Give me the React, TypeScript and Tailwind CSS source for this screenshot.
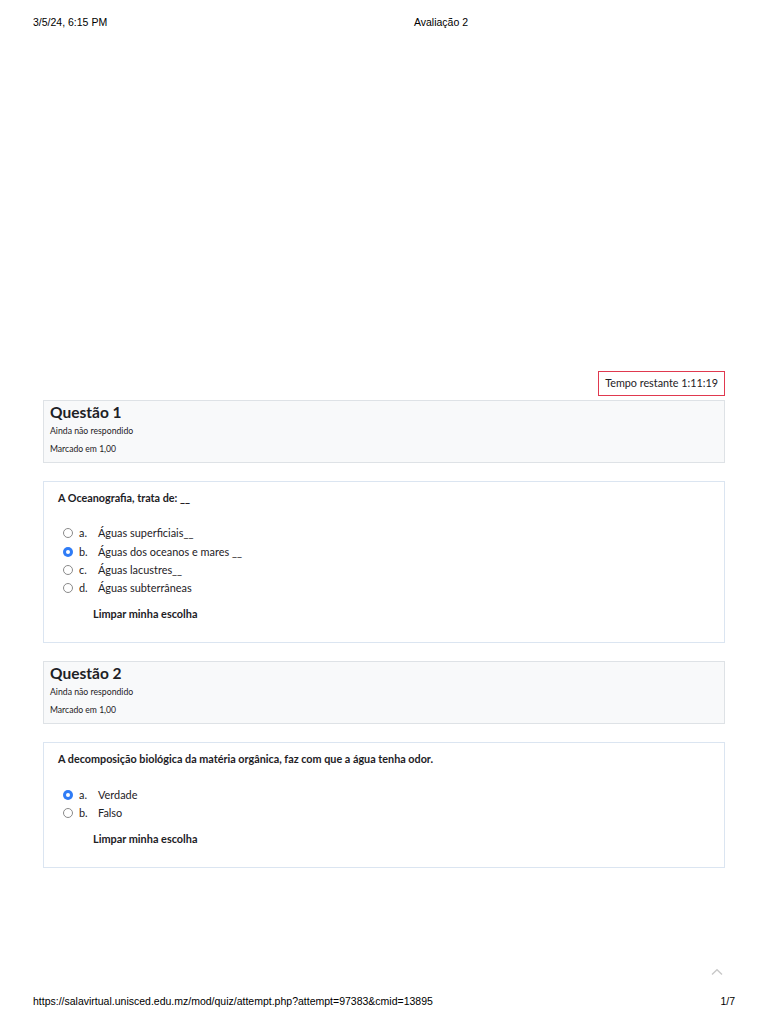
import React from 'react';

interface Question {
  number: number;
  text: string;
  options: { letter: string; label: string }[];
  selected: number;
}

const questions: Question[] = [
  {
    number: 1,
    text: 'A Oceanografia, trata de: __',
    options: [
      { letter: 'a.', label: 'Águas superficiais__' },
      { letter: 'b.', label: 'Águas dos oceanos e mares __' },
      { letter: 'c.', label: 'Águas lacustres__' },
      { letter: 'd.', label: 'Águas subterrâneas' },
    ],
    selected: 1,
  },
  {
    number: 2,
    text: 'A decomposição biológica da matéria orgânica, faz com que a água tenha odor.',
    options: [
      { letter: 'a.', label: 'Verdade' },
      { letter: 'b.', label: 'Falso' },
    ],
    selected: 0,
  },
];

function Radio({ checked }: { checked: boolean }) {
  if (checked) {
    return (
      <span className="flex h-[10px] w-[10px] items-center justify-center rounded-full bg-[#2f7cf6]">
        <span className="h-[4px] w-[4px] rounded-full bg-white" />
      </span>
    );
  }
  return <span className="h-[10px] w-[10px] rounded-full border border-[#8a8a8a] bg-white" />;
}

function QuestionBlock({ q }: { q: Question }) {
  return (
    <div className="flex flex-col">
      <div className="h-[63px] border border-[#dee2e6] bg-[#f8f9fa] px-[6px] pt-[2px]">
        <p className="text-[15.5px] font-bold leading-[18px] text-[#1d2125]">Questão {q.number}</p>
        <p className="mt-[5px] text-[8.7px] leading-[10px] text-[#1d2125]">Ainda não respondido</p>
        <p className="mt-[8px] text-[8.6px] leading-[10px] text-[#1d2125]">Marcado em 1,00</p>
      </div>
      <div className="mt-[18px] border border-[#dbe5f1] bg-white px-[14px] pb-[22px] pt-[10px]">
        <p className="text-[10.8px] font-bold leading-[12px] text-[#1d2125]">{q.text}</p>
        <div className="mt-[23px] flex flex-col gap-[5.8px] pl-[5px]">
          {q.options.map((o, i) => (
            <div key={o.letter} className="flex h-[12.5px] items-center text-[10.9px] leading-[12px] text-[#1d2125]">
              <Radio checked={i === q.selected} />
              <span className="ml-[6px] w-[19px]">{o.letter}</span>
              <span>{o.label}</span>
            </div>
          ))}
        </div>
        <p className="ml-[35px] mt-[14px] text-[10.9px] font-bold leading-[12px] text-[#1d2125]">Limpar minha escolha</p>
      </div>
    </div>
  );
}

export default function App() {
  return (
    <div className="relative flex h-[1024px] w-[768px] flex-col bg-white" style={{ fontFamily: 'Lato, "Noto Sans", sans-serif' }}>
      <div className="flex h-[47px] items-center px-[33px] pb-[1px] text-[10.5px] text-black" style={{ fontFamily: '"Liberation Sans", Arial, sans-serif' }}>
        <span className="w-[200px]">3/5/24, 6:15 PM</span>
        <span className="flex-1 pr-[86px] text-center">Avaliação 2</span>
      </div>

      <div className="mx-[43px] mt-[324px] flex flex-col">
        <div className="flex justify-end">
          <div className="flex h-[25px] items-center border border-[#e0394f] px-[6px] text-[10.8px] text-[#1d2125]">Tempo restante 1:11:19</div>
        </div>
        <div className="mt-[4px] flex flex-col gap-[18px]">
          {questions.map(q => (
            <QuestionBlock key={q.number} q={q} />
          ))}
        </div>
      </div>

      <div className="flex-1" />
      <div className="flex justify-end pr-[45px]">
        <svg width="12" height="8" viewBox="0 0 12 8" className="mb-[15px]">
          <path d="M1 6.5 L6 1.8 L11 6.5" fill="none" stroke="#c8c8c8" strokeWidth="1.4" />
        </svg>
      </div>
      <div className="flex h-[33px] items-start justify-between px-[33px] pt-[3px] text-[10.5px] text-black" style={{ fontFamily: '"Liberation Sans", Arial, sans-serif' }}>
        <span>https://salavirtual.unisced.edu.mz/mod/quiz/attempt.php?attempt=97383&cmid=13895</span>
        <span>1/7</span>
      </div>
    </div>
  );
}
